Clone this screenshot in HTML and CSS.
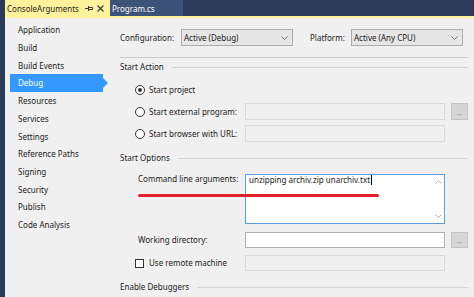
FILE: index.html
```html
<!DOCTYPE html>
<html lang="en">
<head>
  <meta charset="UTF-8">
  <title>ConsoleArguments - Debug</title>
  <link rel="stylesheet" href="styles.css">
</head>
<body>
  <div class="window">
    <div class="tabs">
      <div class="tab tab-active">
        <span>ConsoleArguments</span>
        <svg class="tab-pin" width="8" height="7" viewBox="0 0 8 7">
          <path d="M0 3.5H3M3.5 1V6M3.5 2.5H7.5V4.5H3.5" fill="none" stroke="#3a3a3a" stroke-width="1"/>
        </svg>
        <svg class="tab-close" width="7" height="7" viewBox="0 0 7 7">
          <path d="M0.5 0.5L6.5 6.5M6.5 0.5L0.5 6.5" stroke="#3a3a3a" stroke-width="1.2"/>
        </svg>
      </div>
      <div class="tab">Program.cs</div>
    </div>

    <div class="doc">
      <nav class="nav">
        <div class="nav-item">Application</div>
        <div class="nav-item">Build</div>
        <div class="nav-item">Build Events</div>
        <div class="nav-item current">Debug</div>
        <div class="nav-item">Resources</div>
        <div class="nav-item">Services</div>
        <div class="nav-item">Settings</div>
        <div class="nav-item">Reference Paths</div>
        <div class="nav-item">Signing</div>
        <div class="nav-item">Security</div>
        <div class="nav-item">Publish</div>
        <div class="nav-item">Code Analysis</div>
      </nav>

      <main class="page">
        <div class="config-row">
          <span class="config-label">Configuration:</span>
          <div class="select">
            <span>Active (Debug)</span>
            <svg width="7" height="4" viewBox="0 0 7 4"><path d="M0.5 0.5L3.5 3.5L6.5 0.5" fill="none" stroke="#707070"/></svg>
          </div>
          <span class="config-label platform">Platform:</span>
          <div class="select">
            <span>Active (Any CPU)</span>
            <svg width="7" height="4" viewBox="0 0 7 4"><path d="M0.5 0.5L3.5 3.5L6.5 0.5" fill="none" stroke="#707070"/></svg>
          </div>
        </div>

        <div class="rule"></div>

        <div class="group-title first">Start Action</div>

        <div class="opt-row first-opt">
          <label class="opt-label"><span class="radio checked"></span>Start project</label>
        </div>
        <div class="opt-row">
          <label class="opt-label"><span class="radio"></span>Start external program:</label>
          <div class="textbox"></div>
          <div class="browse">...</div>
        </div>
        <div class="opt-row">
          <label class="opt-label"><span class="radio"></span>Start browser with URL:</label>
          <div class="textbox"></div>
        </div>

        <div class="group-title">Start Options</div>

        <div class="cmd-row">
          <span class="field-label">Command line arguments:</span>
          <div class="textarea">
            <div class="textarea-text">unzipping archiv.zip unarchiv.txt<span class="caret"></span></div>
            <div class="scroll">
              <svg width="7" height="4" viewBox="0 0 7 4"><path d="M0.5 3.5L3.5 0.5L6.5 3.5" fill="none" stroke="#b5b5b5"/></svg>
              <svg width="7" height="4" viewBox="0 0 7 4"><path d="M0.5 0.5L3.5 3.5L6.5 0.5" fill="none" stroke="#b5b5b5"/></svg>
            </div>
          </div>
          <div class="underline"></div>
        </div>

        <div class="field-row">
          <span class="field-label">Working directory:</span>
          <div class="textbox enabled"></div>
          <div class="browse">...</div>
        </div>
        <div class="field-row remote-row">
          <label class="opt-label"><span class="checkbox"></span>Use remote machine</label>
          <div class="textbox"></div>
        </div>

        <div class="group-title">Enable Debuggers</div>
      </main>
    </div>
  </div>
</body>
</html>
```

FILE: styles.css
```css
* {
  box-sizing: border-box;
}
body {
  margin: 0;
  font-family: "Noto Sans", "Open Sans", sans-serif;
  font-size: 8px;
  color: #1b1b1b;
}
.window {
  width: 474px;
  height: 297px;
  background-color: #2b3b5a;
  display: flex;
  flex-direction: column;
  overflow: hidden;
}
.tabs {
  display: flex;
  height: 16px;
  padding-left: 5px;
  flex-shrink: 0;
}
.tab {
  display: flex;
  align-items: center;
  padding: 0 3px 0 2px;
  background-color: #3d5278;
  color: #fff;
  width: 73px;
}
.tab-active {
  width: 105px;
  background-color: #fff29d;
  color: #1e1e1e;
}
.tab-pin {
  margin-left: auto;
  margin-right: 4px;
}
.tab-close {
  margin-right: 3px;
}
.doc {
  flex: 1;
  display: flex;
  margin-left: 5px;
  border-top: 2px solid #fff29d;
  background-color: #f0f0f0;
}
.nav {
  width: 105px;
  flex-shrink: 0;
  padding: 3.4px 0 0 5px;
}
.nav-item {
  position: relative;
  width: 93px;
  height: 17.7px;
  line-height: 17.7px;
  padding-left: 8px;
}
.nav-item.current {
  background-color: #3399ff;
  color: #fff;
}
.nav-item.current::after {
  content: "";
  position: absolute;
  left: 100%;
  top: 50%;
  margin-top: -5.5px;
  border-left: 5px solid #3399ff;
  border-top: 5.5px solid transparent;
  border-bottom: 5.5px solid transparent;
}
.page {
  flex: 1;
  padding: 11px 6px 0 10px;
  line-height: 12px;
}
.config-row {
  display: flex;
  align-items: center;
  height: 17px;
}
.config-label {
  width: 61px;
}
.config-label.platform {
  width: 41px;
  margin-left: 17px;
}
.select {
  width: 112px;
  height: 17px;
  display: flex;
  align-items: center;
  justify-content: space-between;
  padding: 0 4px 0 2px;
  border: 1px solid #acacac;
  background-color: #e6e6e6;
}
.rule {
  margin-top: 11px;
  border-top: 1px solid #cdcdcd;
}
.group-title {
  display: flex;
  align-items: center;
  height: 12px;
  margin-top: 10px;
}
.group-title.first {
  margin-top: 3px;
}
.group-title::after {
  content: "";
  flex: 1;
  margin-left: 8px;
  border-top: 1px solid #d4d4d4;
}
.opt-row {
  display: flex;
  align-items: center;
  height: 17px;
  margin-top: 5px;
  padding-left: 15px;
}
.opt-row.first-opt {
  margin-top: 8px;
}
.opt-label {
  width: 110px;
  display: flex;
  align-items: center;
}
.radio {
  width: 10px;
  height: 10px;
  margin-right: 4px;
  border: 1px solid #333;
  border-radius: 50%;
  background-color: #fff;
  display: flex;
  align-items: center;
  justify-content: center;
}
.radio.checked::before {
  content: "";
  width: 4px;
  height: 4px;
  border-radius: 50%;
  background-color: #333;
}
.checkbox {
  width: 9px;
  height: 9px;
  margin-right: 5px;
  border: 1px solid #333;
  background-color: #fff;
}
.textbox {
  width: 200px;
  height: 17px;
  border: 1px solid #d9d9d9;
  background-color: #f0f0f0;
}
.textbox.enabled {
  height: 16px;
  border-color: #abadb3;
  background-color: #fff;
}
.browse {
  width: 17px;
  height: 17px;
  margin-left: 6px;
  border: 1px solid #c4c4c4;
  background-color: #d6d6d6;
  color: #8a8a8a;
  font-size: 7px;
  line-height: 17px;
  text-align: center;
}
.cmd-row {
  position: relative;
  display: flex;
  margin-top: 10px;
  padding-left: 18px;
}
.field-label {
  width: 107px;
  line-height: 10px;
}
.textarea {
  width: 200px;
  height: 50px;
  display: flex;
  border: 1px solid #5b9de3;
  background-color: #fff;
}
.textarea-text {
  flex: 1;
  padding-left: 3px;
  line-height: 10px;
}
.caret {
  display: inline-block;
  width: 1px;
  height: 10px;
  margin-left: 1px;
  vertical-align: top;
  background-color: #000;
}
.scroll {
  width: 12px;
  display: flex;
  flex-direction: column;
  align-items: center;
  justify-content: space-between;
  padding: 5px 0 5px;
}
.underline {
  position: absolute;
  left: 17.7px;
  top: 19.5px;
  width: 241px;
  height: 3px;
  border-radius: 2px;
  background-color: #e3202b;
}
.field-row {
  display: flex;
  align-items: center;
  height: 16px;
  margin-top: 8px;
  padding-left: 18px;
}
.field-row .browse {
  height: 16px;
  line-height: 16px;
}
.remote-row {
  margin-top: 7px;
  padding-left: 15px;
}
.remote-row .textbox {
  height: 16px;
}
```
